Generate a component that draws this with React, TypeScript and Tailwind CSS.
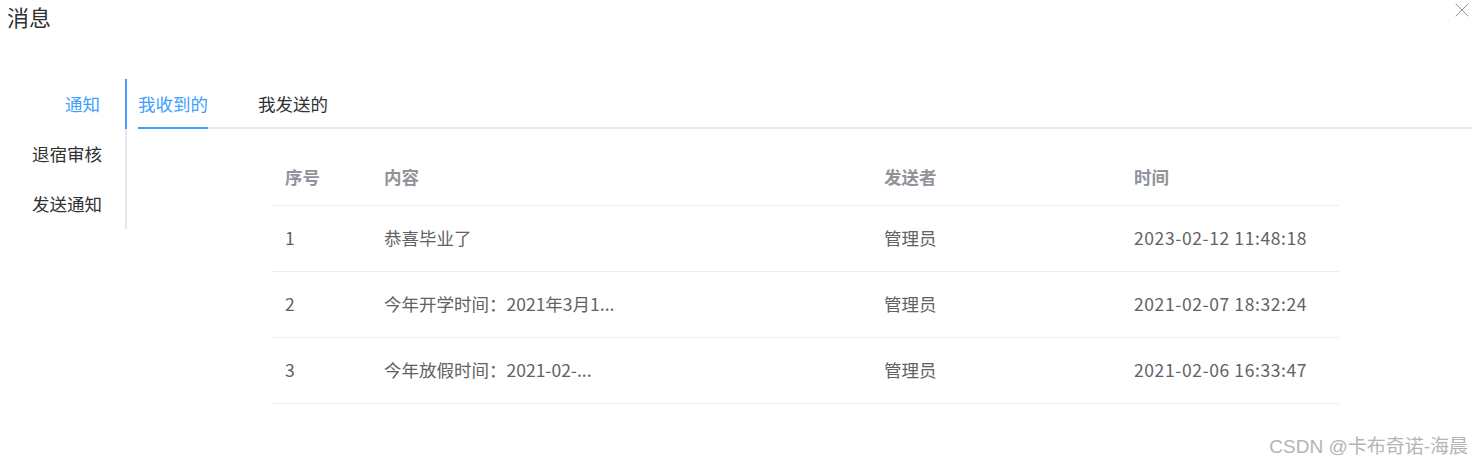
import { X } from "lucide-react"

const rows = [
  { id: 1, content: "恭喜毕业了", sender: "管理员", time: "2023-02-12 11:48:18" },
  { id: 2, content: "今年开学时间：2021年3月1...", sender: "管理员", time: "2021-02-07 18:32:24" },
  { id: 3, content: "今年放假时间：2021-02-...", sender: "管理员", time: "2021-02-06 16:33:47" },
]

const sideTabs = ["通知", "退宿审核", "发送通知"]

export default function App() {
  return (
    <div className="relative h-[467px] w-full overflow-hidden bg-white font-['Noto_Sans_CJK_SC','Liberation_Sans',sans-serif] text-[#303133]">
      {/* 对话框标题 */}
      <div className="flex h-[79px] items-start justify-between pl-[7px] pr-[9px]">
        <span className="mt-[1px] text-[22px] leading-[30px]">消息</span>
        <button className="-mt-[2px] text-[#909399]">
          <X className="h-[24px] w-[24px]" strokeWidth={1} />
        </button>
      </div>

      <div className="flex">
        {/* 左侧纵向 tabs */}
        <div className="flex w-[127px] shrink-0 flex-col self-start border-r-2 border-[#e4e7ed]">
          {sideTabs.map((t, i) => (
            <div
              key={t}
              className={
                i === 0
                  ? "relative -mr-[2px] flex h-[50px] items-center justify-end border-r-2 border-[#409eff] pr-[25px] text-[17.5px] text-[#409eff]"
                  : "flex h-[50px] items-center justify-end pr-[23px] text-[17.5px]"
              }
            >
              {t}
            </div>
          ))}
        </div>

        {/* 右侧内容 */}
        <div className="ml-[11px] mr-[11px] flex-1">
          <div className="flex h-[50px] border-b-2 border-[#e4e7ed]">
            <div className="relative -mb-[2px] flex items-center border-b-2 border-[#409eff] pt-[2px] text-[17.5px] text-[#409eff]">
              我收到的
            </div>
            <div className="ml-[50px] flex items-center pt-[2px] text-[17.5px]">我发送的</div>
          </div>

          <table className="ml-[133px] mt-[10px] w-[1068px] table-fixed border-collapse text-[17.5px]">
            <colgroup>
              <col className="w-[99px]" />
              <col className="w-[500px]" />
              <col className="w-[250px]" />
              <col />
            </colgroup>
            <thead>
              <tr className="h-[66px] border-b border-[#ebeef5] text-left font-bold text-[#909399]">
                <th className="pl-[14px] pt-[10px] font-bold">序号</th>
                <th className="pl-[14px] pt-[10px] font-bold">内容</th>
                <th className="pl-[14px] pt-[10px] font-bold">发送者</th>
                <th className="pl-[14px] pt-[10px] font-bold">时间</th>
              </tr>
            </thead>
            <tbody className="text-[#606266]">
              {rows.map((r) => (
                <tr key={r.id} className="h-[66px] border-b border-[#ebeef5]">
                  <td className="pl-[14px]">{r.id}</td>
                  <td className="pl-[14px]">{r.content}</td>
                  <td className="pl-[14px]">{r.sender}</td>
                  <td className="pl-[14px] tracking-[0.6px]">{r.time}</td>
                </tr>
              ))}
            </tbody>
          </table>
        </div>
      </div>

      {/* 水印 */}
      <div className="absolute bottom-[6px] right-[15px] font-['Liberation_Sans','Noto_Sans_CJK_SC',sans-serif] text-[19px] text-[#b4b4b4]">
        CSDN @卡布奇诺-海晨
      </div>
    </div>
  )
}
